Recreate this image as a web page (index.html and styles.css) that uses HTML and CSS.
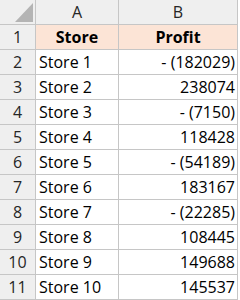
FILE: index.html
```html
<!DOCTYPE html>
<html>
<head>
<meta charset="utf-8">
<link rel="stylesheet" href="styles.css">
</head>
<body>
<div class="sheet">
  <div class="corner"><span class="tri"></span></div>
  <div class="colhead">A</div>
  <div class="colhead">B</div>

  <div class="rowhead">1</div><div class="cell title">Store</div><div class="cell title">Profit</div>
  <div class="rowhead">2</div><div class="cell">Store 1</div><div class="cell num">- (182029)</div>
  <div class="rowhead">3</div><div class="cell">Store 2</div><div class="cell num">238074</div>
  <div class="rowhead">4</div><div class="cell">Store 3</div><div class="cell num">- (7150)</div>
  <div class="rowhead">5</div><div class="cell">Store 4</div><div class="cell num">118428</div>
  <div class="rowhead">6</div><div class="cell">Store 5</div><div class="cell num">- (54189)</div>
  <div class="rowhead">7</div><div class="cell">Store 6</div><div class="cell num">183167</div>
  <div class="rowhead">8</div><div class="cell">Store 7</div><div class="cell num">- (22285)</div>
  <div class="rowhead">9</div><div class="cell">Store 8</div><div class="cell num">108445</div>
  <div class="rowhead">10</div><div class="cell">Store 9</div><div class="cell num">149688</div>
  <div class="rowhead">11</div><div class="cell">Store 10</div><div class="cell num">145537</div>
</div>
</body>
</html>
```
FILE: styles.css
```css
html, body {
  margin: 0;
  padding: 0;
  background: #ffffff;
}
body {
  width: 240px;
  height: 300px;
  overflow: hidden;
  font-family: "Open Sans", "Liberation Sans", sans-serif;
  font-size: 16px;
  color: #000;
}
.sheet {
  display: grid;
  grid-template-columns: 35px 82px 118px;
  grid-template-rows: 24px repeat(11, 24px);
  gap: 1px;
  background: #c6c6c6;
  width: 237px;
  padding: 0 1px 1px 0;
}
.corner, .colhead, .rowhead {
  background: #efefef;
  color: #262626;
  display: flex;
  align-items: center;
  justify-content: center;
  line-height: 1;
}
.corner {
  position: relative;
}
.tri {
  position: absolute;
  right: 2px;
  bottom: 2px;
  width: 0;
  height: 0;
  border-left: 18px solid transparent;
  border-bottom: 19px solid #b4b4b4;
}
.cell {
  background: #ffffff;
  display: flex;
  align-items: center;
  padding: 0 3px;
  line-height: 1;
  white-space: nowrap;
}
.title {
  background: #fce4d6;
  font-weight: 700;
  justify-content: center;
}
.num {
  justify-content: flex-end;
  padding-right: 2px;
}
```
